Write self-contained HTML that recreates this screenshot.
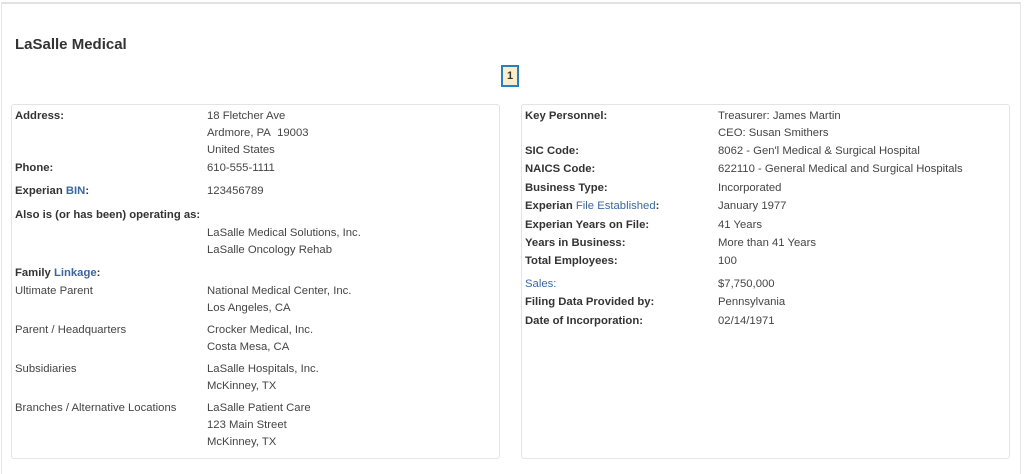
<!DOCTYPE html>
<html><head><meta charset="utf-8"><style>
html,body{margin:0;padding:0;width:1024px;height:463px;overflow:hidden;background:#fff;font-family:"Liberation Sans",sans-serif;}
.frame{position:absolute;left:1px;top:2px;width:1018px;height:470px;border-top:2px solid #e2e2e2;border-left:1px solid #e6e6e6;border-right:1px solid #e6e6e6;}
.w{position:absolute;left:0;top:1px;width:1024px;height:463px;}
.t{position:absolute;font-size:11.3px;line-height:14px;color:#444;white-space:nowrap;}
.b{font-weight:bold;color:#333;}
.a{color:#3a67a0;}
.panel{position:absolute;top:104px;height:353px;width:487px;border:1px solid #e4e4e4;border-radius:3px;}
h1{position:absolute;left:15px;top:36px;margin:0;font-size:15px;font-weight:bold;color:#333;}
.pg{position:absolute;left:501px;top:65px;height:18px;border:2px solid #2a7fc0;background:#fbeecb;font-size:11px;font-weight:bold;color:#333;text-align:center;line-height:18px;width:14px;}
</style></head><body>
<div class="frame"></div>
<h1>LaSalle Medical</h1>
<div class="pg">1</div>
<div class="panel" style="left:11px"></div>
<div class="panel" style="left:521px"></div>
<div class="w">
<div class="t b" style="left:15px;top:108px">Address:</div>
<div class="t" style="left:207px;top:108px">18 Fletcher Ave</div>
<div class="t" style="left:207px;top:125px">Ardmore, PA&nbsp; 19003</div>
<div class="t" style="left:207px;top:142px">United States</div>
<div class="t b" style="left:15px;top:160px">Phone:</div>
<div class="t" style="left:207px;top:160px">610-555-1111</div>
<div class="t b" style="left:15px;top:183px">Experian <span class="a">BIN</span>:</div>
<div class="t" style="left:207px;top:183px">123456789</div>
<div class="t b" style="left:15px;top:207px">Also is (or has been) operating as:</div>
<div class="t" style="left:207px;top:225px">LaSalle Medical Solutions, Inc.</div>
<div class="t" style="left:207px;top:242px">LaSalle Oncology Rehab</div>
<div class="t b" style="left:15px;top:265px">Family <span class="a">Linkage</span>:</div>
<div class="t" style="left:15px;top:283px">Ultimate Parent</div>
<div class="t" style="left:207px;top:283px">National Medical Center, Inc.</div>
<div class="t" style="left:207px;top:300px">Los Angeles, CA</div>
<div class="t" style="left:15px;top:322px">Parent / Headquarters</div>
<div class="t" style="left:207px;top:322px">Crocker Medical, Inc.</div>
<div class="t" style="left:207px;top:339px">Costa Mesa, CA</div>
<div class="t" style="left:15px;top:361px">Subsidiaries</div>
<div class="t" style="left:207px;top:361px">LaSalle Hospitals, Inc.</div>
<div class="t" style="left:207px;top:378px">McKinney, TX</div>
<div class="t" style="left:15px;top:400px">Branches / Alternative Locations</div>
<div class="t" style="left:207px;top:400px">LaSalle Patient Care</div>
<div class="t" style="left:207px;top:417px">123 Main Street</div>
<div class="t" style="left:207px;top:434px">McKinney, TX</div>

<div class="t b" style="left:525px;top:108px">Key Personnel:</div>
<div class="t" style="left:718px;top:108px">Treasurer: James Martin</div>
<div class="t" style="left:718px;top:125px">CEO: Susan Smithers</div>
<div class="t b" style="left:525px;top:143px">SIC Code:</div>
<div class="t" style="left:718px;top:143px">8062 - Gen'l Medical &amp; Surgical Hospital</div>
<div class="t b" style="left:525px;top:161px">NAICS Code:</div>
<div class="t" style="left:718px;top:161px">622110 - General Medical and Surgical Hospitals</div>
<div class="t b" style="left:525px;top:180px">Business Type:</div>
<div class="t" style="left:718px;top:180px">Incorporated</div>
<div class="t b" style="left:525px;top:198px">Experian <span class="a" style="font-weight:normal">File Established</span>:</div>
<div class="t" style="left:718px;top:198px">January 1977</div>
<div class="t b" style="left:525px;top:217px">Experian Years on File:</div>
<div class="t" style="left:718px;top:217px">41 Years</div>
<div class="t b" style="left:525px;top:235px">Years in Business:</div>
<div class="t" style="left:718px;top:235px">More than 41 Years</div>
<div class="t b" style="left:525px;top:253px">Total Employees:</div>
<div class="t" style="left:718px;top:253px">100</div>
<div class="t a" style="left:525px;top:276px">Sales:</div>
<div class="t" style="left:718px;top:276px">$7,750,000</div>
<div class="t b" style="left:525px;top:294px">Filing Data Provided by:</div>
<div class="t" style="left:718px;top:294px">Pennsylvania</div>
<div class="t b" style="left:525px;top:313px">Date of Incorporation:</div>
<div class="t" style="left:718px;top:313px">02/14/1971</div>
</div>
</body></html>
